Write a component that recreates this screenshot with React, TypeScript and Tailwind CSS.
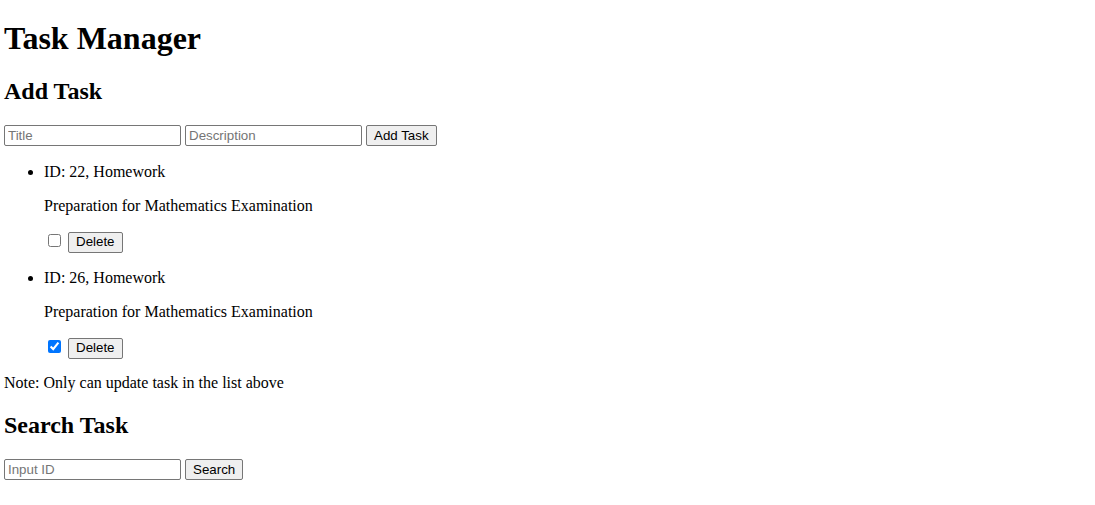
import { useState } from 'react';

type Task = { id: number; title: string; description: string; done: boolean };

const initialTasks: Task[] = [
  { id: 22, title: 'Homework', description: 'Preparation for Mathematics Examination', done: false },
  { id: 26, title: 'Homework', description: 'Preparation for Mathematics Examination', done: true },
];

const inputCls =
  "w-[177px] h-[21px] px-[3px] border border-[#767676] rounded-[2px] bg-white font-['Liberation_Sans',Arial,sans-serif] text-[13.33px] text-black placeholder:text-[#757575] outline-none";
const buttonCls =
  "h-[21px] px-[7px] border border-[#767676] rounded-[2px] bg-[#efefef] font-['Liberation_Sans',Arial,sans-serif] text-[13.33px] text-black leading-none";

export default function App() {
  const [tasks, setTasks] = useState<Task[]>(initialTasks);
  const [title, setTitle] = useState('');
  const [description, setDescription] = useState('');
  const [searchId, setSearchId] = useState('');

  const addTask = () => {
    if (!title) return;
    const nextId = tasks.length ? Math.max(...tasks.map((t) => t.id)) + 1 : 1;
    setTasks([...tasks, { id: nextId, title, description, done: false }]);
    setTitle('');
    setDescription('');
  };

  const toggle = (id: number) =>
    setTasks(tasks.map((t) => (t.id === id ? { ...t, done: !t.done } : t)));

  const remove = (id: number) => setTasks(tasks.filter((t) => t.id !== id));

  return (
    <div className="min-h-screen bg-white px-[4px] pt-[3px] font-['Liberation_Serif','Times_New_Roman',serif] text-[16px] leading-[normal] text-black">
      <h1 className="mt-[17px] mb-[21px] text-[32px] font-bold">Task Manager</h1>

      {/* Add form */}
      <h2 className="mb-[20px] text-[24px] font-bold">Add Task</h2>
      <div className="flex items-center gap-[4px]">
        <input
          className={inputCls}
          placeholder="Title"
          value={title}
          onChange={(e) => setTitle(e.target.value)}
        />
        <input
          className={inputCls}
          placeholder="Description"
          value={description}
          onChange={(e) => setDescription(e.target.value)}
        />
        <button className={buttonCls} onClick={addTask}>
          Add Task
        </button>
      </div>

      <ul className="list-disc pl-[40px] mt-[17px] mb-[15px]">
        {tasks.map((task) => (
          <li key={task.id} className="mb-[16px] last:mb-0">
            ID: {task.id}, {task.title}
            <p className="my-[16px]">{task.description}</p>
            <div className="flex items-center h-[22px]">
              <input
                type="checkbox"
                className="w-[13px] h-[13px] ml-[4px] mr-[7px] mb-[3px] accent-[#0075ff]"
                checked={task.done}
                onChange={() => toggle(task.id)}
              />
              <button className={buttonCls} onClick={() => remove(task.id)}>
                Delete
              </button>
            </div>
          </li>
        ))}
      </ul>
      <p>Note: Only can update task in the list above</p>

      {/* Search */}
      <h2 className="my-[20px] text-[24px] font-bold">Search Task</h2>
      <div className="flex items-center gap-[4px]">
        <input
          className={inputCls}
          placeholder="Input ID"
          value={searchId}
          onChange={(e) => setSearchId(e.target.value)}
        />
        <button className={buttonCls}>Search</button>
      </div>
    </div>
  );
}
